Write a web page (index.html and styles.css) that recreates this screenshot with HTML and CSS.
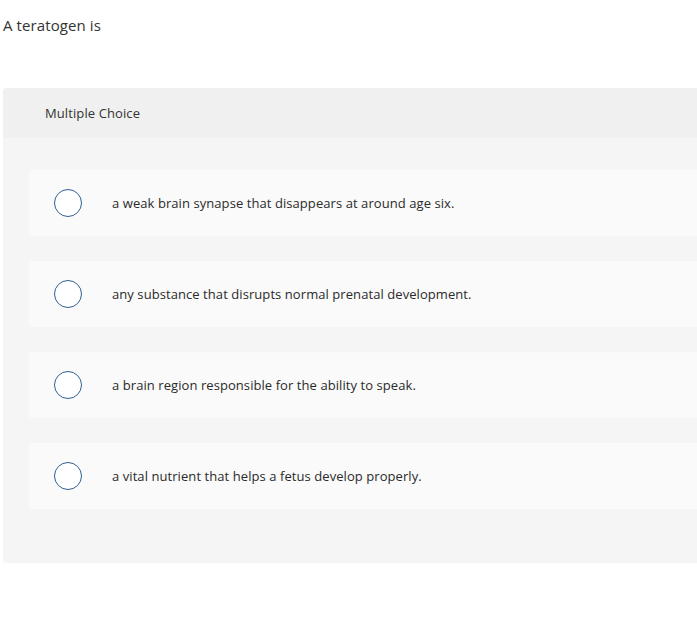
FILE: index.html
```html
<!DOCTYPE html>
<html>
<head>
<meta charset="utf-8">
<link rel="stylesheet" href="styles.css">
</head>
<body>
<div class="page">
  <p class="question">A teratogen is</p>
  <div class="panel">
    <div class="panel-head">Multiple Choice</div>
    <div class="panel-body">
      <div class="option"><span class="radio"></span><span class="label">a weak brain synapse that disappears at around age six.</span></div>
      <div class="option"><span class="radio"></span><span class="label">any substance that disrupts normal prenatal development.</span></div>
      <div class="option"><span class="radio"></span><span class="label">a brain region responsible for the ability to speak.</span></div>
      <div class="option"><span class="radio"></span><span class="label">a vital nutrient that helps a fetus develop properly.</span></div>
    </div>
  </div>
</div>
</body>
</html>
```

FILE: styles.css
```css
html, body {
  margin: 0;
  padding: 0;
  background: #fff;
}
body {
  font-family: "Open Sans", "Lato", sans-serif;
  color: #333;
}
.page {
  padding-left: 3px;
  overflow: hidden;
}
.question {
  margin: 0;
  padding-top: 15px;
  height: 88px;
  box-sizing: border-box;
  font-size: 15px;
  line-height: 20px;
  letter-spacing: 0.1px;
  color: #333;
}
.panel {
  width: calc(100% + 20px);
  border-radius: 3px;
  overflow: hidden;
}
.panel-head {
  background: #f0f0f0;
  height: 50px;
  display: flex;
  align-items: center;
  padding-left: 42px;
  font-size: 13px;
  letter-spacing: 0.1px;
  color: #333;
}
.panel-body {
  background: #f5f5f5;
  padding: 32px 0 54px 26px;
  display: flex;
  flex-direction: column;
  gap: 25px;
}
.option {
  background: #fafafa;
  height: 66px;
  border-radius: 3px 0 0 3px;
  display: flex;
  align-items: center;
  padding-left: 25px;
}
.radio {
  width: 28px;
  height: 28px;
  box-sizing: border-box;
  border: 1.5px solid #2f5f8f;
  border-radius: 50%;
  background: #fff;
  flex: none;
}
.label {
  margin-left: 30px;
  font-size: 13px;
  letter-spacing: 0.07px;
  color: #2a2a2a;
}
```
